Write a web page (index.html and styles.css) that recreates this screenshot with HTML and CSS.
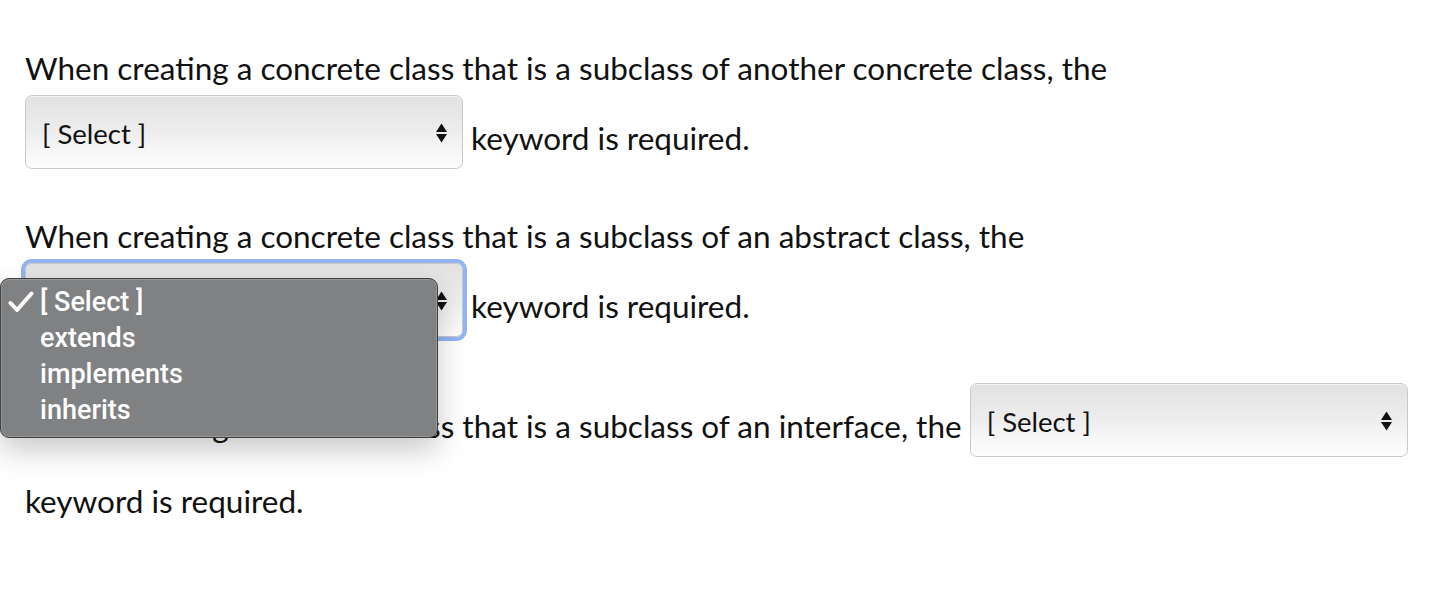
FILE: index.html
```html
<!DOCTYPE html>
<html lang="en">
<head>
<meta charset="utf-8">
<title>Quiz</title>
<link rel="stylesheet" href="styles.css">
</head>
<body>
<div class="quiz">
  <p class="q">When creating a concrete class that is a subclass of another concrete class, the <span class="sel"><span class="sel-text">[ Select ]</span><svg class="arrows" width="11" height="22" viewBox="0 0 11 22"><polygon points="5.5,1.5 11,10 0,10"/><polygon points="0,12 11,12 5.5,20.5"/></svg></span> keyword is required.</p>
  <p class="q">When creating a concrete class that is a subclass of an abstract class, the <span class="sel focused"><span class="sel-text">[ Select ]</span><svg class="arrows" width="11" height="22" viewBox="0 0 11 22"><polygon points="5.5,1.5 11,10 0,10"/><polygon points="0,12 11,12 5.5,20.5"/></svg><span class="menu"><span class="opt"><svg class="check" width="26" height="22" viewBox="0 0 26 22"><path d="M2.5 12 L9 19 L23.5 2.5" fill="none" stroke="#fff" stroke-width="4" stroke-linecap="round" stroke-linejoin="round"/></svg>[ Select ]</span><span class="opt">extends</span><span class="opt">implements</span><span class="opt">inherits</span></span></span> keyword is required.</p>
  <p class="q">When creating a concrete class that is a subclass of an interface, the <span class="sel"><span class="sel-text">[ Select ]</span><svg class="arrows" width="11" height="22" viewBox="0 0 11 22"><polygon points="5.5,1.5 11,10 0,10"/><polygon points="0,12 11,12 5.5,20.5"/></svg></span> keyword is required.</p>
</div>
</body>
</html>
```
FILE: styles.css
```css
html, body {
  margin: 0;
  padding: 0;
  background: #fff;
}
body {
  font-family: Lato, "Open Sans", sans-serif;
  font-size: 31.5px;
  line-height: 48px;
  color: #111;
}
.quiz {
  padding: 44px 25px 0;
}
.q {
  margin: 0 0 23px;
}
.sel {
  position: relative;
  display: inline-flex;
  align-items: center;
  justify-content: space-between;
  box-sizing: border-box;
  width: 438px;
  height: 74px;
  margin: 3px 0 20px;
  padding: 2px 16px 0 16px;
  border: 1px solid #c9c9c9;
  border-radius: 7px;
  background: linear-gradient(#e2e2e2 0%, #ececec 45%, #f6f6f6 75%, #fefefe 100%);
  box-shadow: inset 0 1px 0 rgba(255,255,255,0.6);
  vertical-align: 6px;
  font-size: 27.5px;
  line-height: normal;
  color: #111;
}
.sel.focused {
  box-shadow: 0 0 0 4px #93b4f1;
}
.sel-text {
  white-space: pre;
}
.arrows {
  fill: #111;
  flex: none;
  margin-right: -1px;
}
.menu {
  position: absolute;
  left: -26px;
  top: 14px;
  z-index: 5;
  box-sizing: border-box;
  width: 438px;
  height: 160px;
  padding: 5px 0 0;
  display: flex;
  flex-direction: column;
  background: #808183;
  border: 1px solid #3f3f40;
  border-radius: 9px;
  box-shadow: inset 0 0 0 1px rgba(255,255,255,0.18), 0 12px 30px rgba(0,0,0,0.22);
  font-family: Roboto, "Liberation Sans", sans-serif;
  font-weight: 500;
  font-size: 27px;
  color: #fff;
}
.opt {
  position: relative;
  display: block;
  height: 36px;
  line-height: 36px;
  padding-left: 39px;
  white-space: pre;
}
.check {
  position: absolute;
  left: 7px;
  top: 7px;
}
```
